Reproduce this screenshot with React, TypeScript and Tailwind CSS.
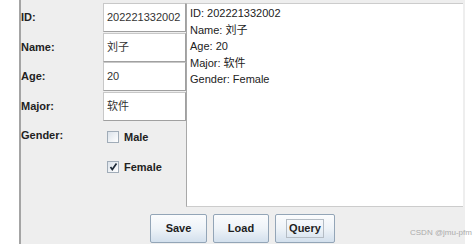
export default function App() {
  const font = { fontFamily: '"Liberation Sans", Arial, "Noto Sans CJK SC", sans-serif' };
  const field =
    "h-[29px] bg-white border border-[#c8c8c8] border-b-[#a0a0a0] border-r-[#a0a0a0] flex items-center pl-[3px] text-[11px] text-[#333333]";
  const label = "h-[29px] flex items-center text-[11px] font-bold text-[#222222]";
  const btn =
    "h-[29px] rounded-[2px] border border-[#93a5b7] bg-gradient-to-b from-[#fbfcfd] via-[#eef3f8] to-[#d3e0ed] text-[11px] font-bold text-[#1d1d1d] flex items-center justify-center";
  return (
    <div className="w-[474px] h-[244px] bg-white flex overflow-hidden relative" style={font}>
      <div className="w-[19px] shrink-0" />
      <div className="w-[446px] h-[244px] bg-[#eeeeee] border-l-2 border-[#a4a4a4] flex flex-col shrink-0">
        <div className="flex">
          <div className="w-[165px] pt-[3px] grid grid-cols-[82px_83px] auto-rows-[29.5px]">
            <div className={label}>ID:</div>
            <div className={field}>202221332002</div>
            <div className={label}>Name:</div>
            <div className={field}>刘子</div>
            <div className={label}>Age:</div>
            <div className={field}>20</div>
            <div className={label}>Major:</div>
            <div className={field}>软件</div>
            <div className={label}>Gender:</div>
            <div className="flex items-center pl-[4px] pt-[3px] gap-[5px]">
              <span className="w-[12px] h-[12px] border border-[#a0acb8] bg-gradient-to-br from-[#dbe2ea] to-[#ffffff]" />
              <span className="text-[11px] font-bold text-[#222222]">Male</span>
            </div>
            <div />
            <div className="flex items-center pl-[4px] pt-[3px] gap-[5px]">
              <span className="w-[12px] h-[12px] border border-[#a0acb8] bg-gradient-to-br from-[#dbe2ea] to-[#ffffff] flex items-center justify-center">
                <svg width="9" height="9" viewBox="0 0 9 9">
                  <path d="M1.5 5 L3.3 7.5 L7.5 1.5" stroke="#1e2a38" strokeWidth="1.7" fill="none" />
                </svg>
              </span>
              <span className="text-[11px] font-bold text-[#222222]">Female</span>
            </div>
          </div>
          <div className="w-[277px] h-[204px] mt-[3px] bg-white border-l border-t border-b border-[#cccccc] border-l-[#a8a8a8] pl-[3px] pt-[1px] text-[11px] leading-[16.5px] text-[#222222]">
            <div>ID: 202221332002</div>
            <div>Name: 刘子</div>
            <div>Age: 20</div>
            <div>Major: 软件</div>
            <div>Gender: Female</div>
          </div>
        </div>
        <div className="flex pl-[129px] mt-[7px]">
          <div className={btn + " w-[57px]"}>Save</div>
          <div className={btn + " w-[56px] ml-[6px]"}>Load</div>
          <div className={btn + " w-[60px] ml-[6px]"}>
            <span className="border border-[#b4bcc4] px-[2px] py-[2px] leading-[13px]">Query</span>
          </div>
        </div>
      </div>
      <div className="absolute left-[410px] top-[227px] text-[8px] text-[#ababab]">CSDN @jmu-pfm</div>
    </div>
  );
}
